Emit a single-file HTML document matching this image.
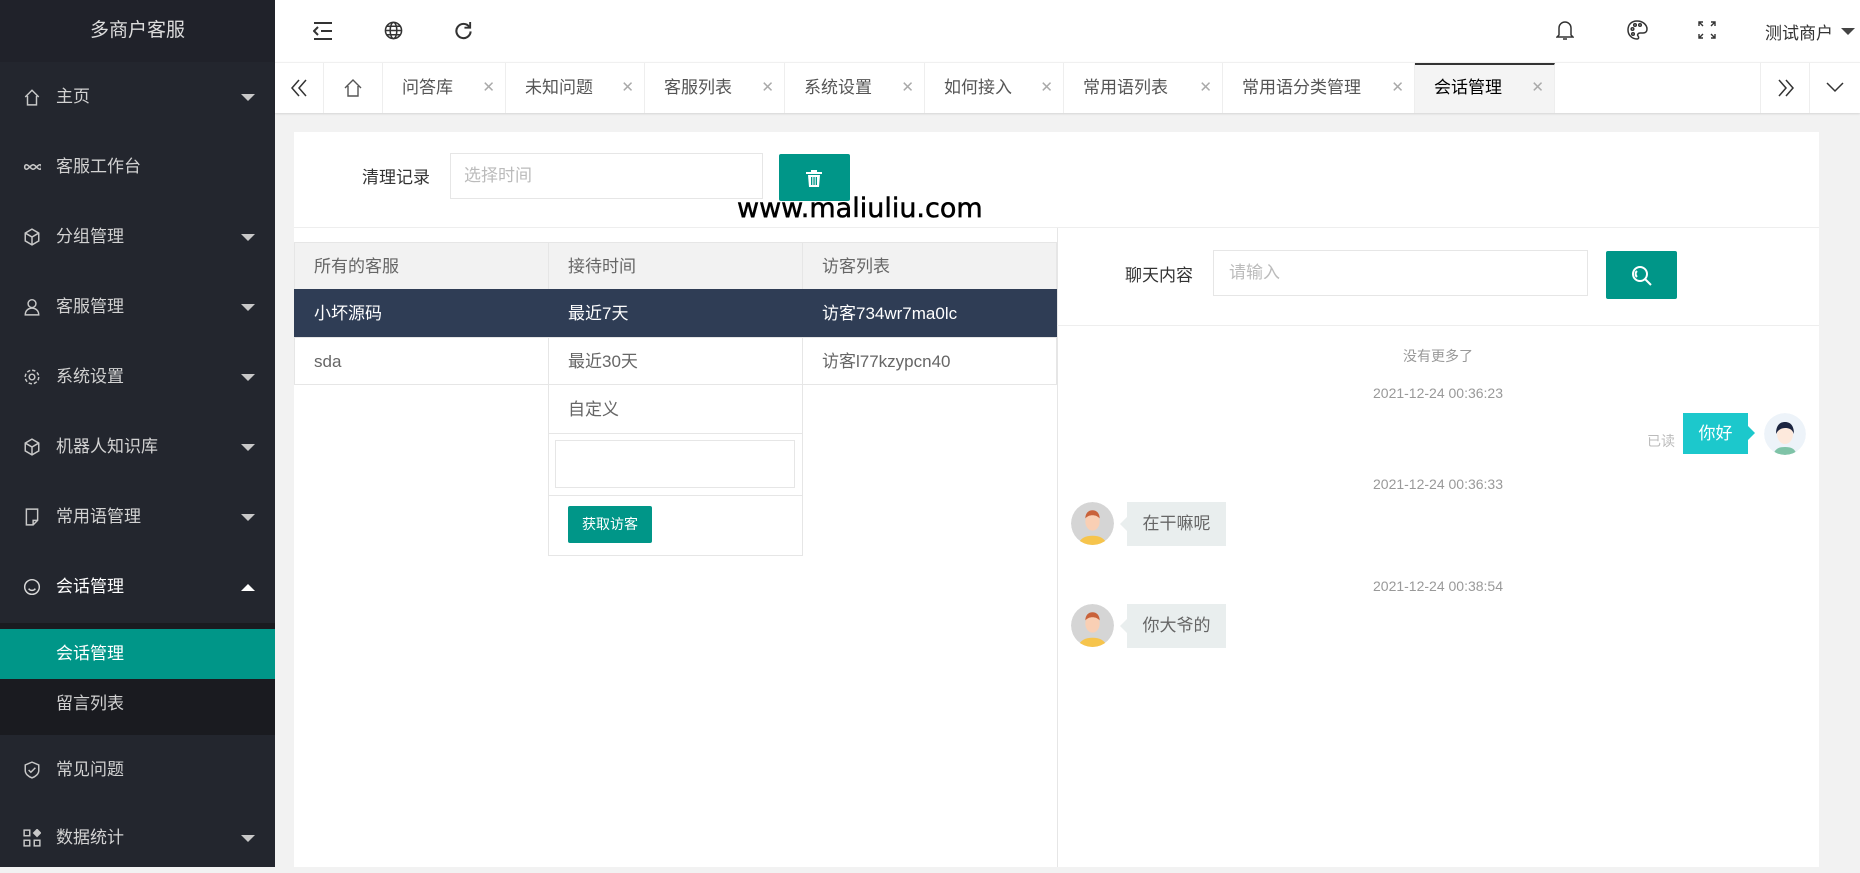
<!DOCTYPE html>
<html><head><meta charset="utf-8"><style>
*{margin:0;padding:0;box-sizing:border-box}
body{width:1860px;height:867px;overflow:hidden;background:#f2f2f2;font-family:"Liberation Sans","Noto Sans CJK SC",sans-serif;position:relative}
.abs{position:absolute}
#side{left:0;top:0;width:275px;height:867px;background:#23262e}
#logo{left:0;top:0;width:275px;height:62px;background:#20222a;color:#dcdcdc;font-size:19px;text-align:center;line-height:62px}
.mi{position:absolute;left:0;width:275px;height:70px;line-height:70px;color:#d2d2d2;font-size:17px}
.mi .t{position:absolute;left:56px}
.mi svg{position:absolute;left:23px;top:26px}
.arr{position:absolute;left:241px;top:32px;width:0;height:0;border-left:7px solid transparent;border-right:7px solid transparent;border-top:7px solid #c8c8c8}
.arr.up{border-top:0;border-bottom:7px solid #fff}
#hdr{left:275px;top:0;width:1585px;height:62px;background:#fff}
#tabs{left:275px;top:62px;width:1585px;height:51px;background:#fff;border-top:1px solid #f0f0f0;box-shadow:0 1px 2px rgba(0,0,0,.12)}
.tab{position:absolute;top:0;height:50px;line-height:50px;border-right:1px solid #eee;font-size:17px;color:#555}
.tab .x{position:absolute;right:10px;color:#aaa;font-size:15px}
#card{left:294px;top:132px;width:1525px;height:735px;background:#fff}
.cell{position:absolute;height:48px;line-height:48px;font-size:17px;color:#666;padding-left:19px;border:1px solid #e6e6e6}
.ts{position:absolute;left:1057px;width:762px;text-align:center;color:#999;font-size:14px}
</style></head><body>
<div id="side" class="abs">
 <div id="logo" class="abs">多商户客服</div>
 <div class="mi" style="top:62px"><svg width="18" height="18" viewBox="0 0 16 16" fill="none" stroke="#c8c8c8" stroke-width="1.3"><path d="M2 8L8 2l6 6M4 7v8h8V7"/></svg><span class="t">主页</span><i class="arr"></i></div>
 <div class="mi" style="top:132px"><svg width="18" height="18" viewBox="0 0 16 16" fill="none" stroke="#c8c8c8" stroke-width="1.4"><path d="M3 6c-2 0-2 4 0 4s4-4 6-4 4 4 6 4 2-4 0-4-4 4-6 4-4-4-6-4z"/></svg><span class="t">客服工作台</span></div>
 <div class="mi" style="top:202px"><svg width="18" height="18" viewBox="0 0 16 16" fill="none" stroke="#c8c8c8" stroke-width="1.3"><path d="M8 1l6 3.5v7L8 15l-6-3.5v-7zM2 4.5L8 8l6-3.5M8 8v7"/></svg><span class="t">分组管理</span><i class="arr"></i></div>
 <div class="mi" style="top:272px"><svg width="18" height="18" viewBox="0 0 16 16" fill="none" stroke="#c8c8c8" stroke-width="1.3"><circle cx="8" cy="5" r="3.5"/><path d="M2 15c0-4 3-6 6-6s6 2 6 6z"/></svg><span class="t">客服管理</span><i class="arr"></i></div>
 <div class="mi" style="top:342px"><svg width="18" height="18" viewBox="0 0 16 16" fill="none" stroke="#c8c8c8" stroke-width="1.3"><circle cx="8" cy="8" r="2.5"/><circle cx="8" cy="8" r="6" stroke-dasharray="3 1.7"/></svg><span class="t">系统设置</span><i class="arr"></i></div>
 <div class="mi" style="top:412px"><svg width="18" height="18" viewBox="0 0 16 16" fill="none" stroke="#c8c8c8" stroke-width="1.3"><path d="M8 1l6 3.5v7L8 15l-6-3.5v-7zM2 4.5L8 8l6-3.5M8 8v7"/></svg><span class="t">机器人知识库</span><i class="arr"></i></div>
 <div class="mi" style="top:482px"><svg width="18" height="18" viewBox="0 0 16 16" fill="none" stroke="#c8c8c8" stroke-width="1.3"><path d="M3 1h10v10l-4 4H3zM9 15v-4h4"/></svg><span class="t">常用语管理</span><i class="arr"></i></div>
 <div class="mi" style="top:552px;color:#fff"><svg width="18" height="18" viewBox="0 0 16 16" fill="none" stroke="#d8d8d8" stroke-width="1.3"><circle cx="8" cy="8" r="6.5"/><path d="M5 9.5c1.5 2 4.5 2 6 0"/></svg><span class="t">会话管理</span><i class="arr up"></i></div>
 <div class="abs" style="left:0;top:623px;width:275px;height:112px;background:#1a1b20"></div>
 <div class="abs" style="left:0;top:629px;width:275px;height:50px;background:#009688;color:#fff;font-size:17px;line-height:50px;padding-left:56px">会话管理</div>
 <div class="abs" style="left:0;top:679px;width:275px;height:50px;color:#d2d2d2;font-size:17px;line-height:50px;padding-left:56px">留言列表</div>
 <div class="mi" style="top:735px"><svg width="18" height="18" viewBox="0 0 16 16" fill="none" stroke="#c8c8c8" stroke-width="1.3"><path d="M8 1l6 2.5v5c0 3-3 5.5-6 6.5-3-1-6-3.5-6-6.5v-5zM5 8l2 2 4-4"/></svg><span class="t">常见问题</span></div>
 <div class="mi" style="top:803px"><svg width="18" height="18" viewBox="0 0 16 16" fill="none" stroke="#c8c8c8" stroke-width="1.3"><rect x="1" y="1" width="5" height="5"/><rect x="1" y="10" width="5" height="5"/><rect x="10" y="10" width="5" height="5"/><path d="M12.5 0.5l3 3-3 3-3-3z" fill="#c8c8c8"/></svg><span class="t">数据统计</span><i class="arr"></i></div>
</div>

<div id="hdr" class="abs">
 <svg class="abs" style="left:38px;top:22px" width="20" height="18" viewBox="0 0 20 18" fill="none" stroke="#333" stroke-width="2"><path d="M1 1h18M8 9h11M1 17h18M5 5L1 9l4 4"/></svg>
 <svg class="abs" style="left:109px;top:21px" width="19" height="19" viewBox="0 0 20 20" fill="none" stroke="#333" stroke-width="1.6"><circle cx="10" cy="10" r="8.5"/><ellipse cx="10" cy="10" rx="3.5" ry="8.5"/><path d="M1.5 10h17M3 5.5h14M3 14.5h14"/></svg>
 <svg class="abs" style="left:179px;top:21px" width="19" height="19" viewBox="0 0 20 20" fill="none" stroke="#333" stroke-width="2.2"><path d="M16 6A7.5 7.5 0 1 0 17.5 11"/><path d="M17 1v6h-6" stroke-width="2"/></svg>
 <svg class="abs" style="left:1281px;top:20px" width="18" height="21" viewBox="0 0 18 21" fill="none" stroke="#333" stroke-width="1.5"><path d="M3 15V8a6 6 0 0 1 12 0v7l2 2H1zM7 19h4"/></svg>
 <svg class="abs" style="left:1352px;top:20px" width="21" height="20" viewBox="0 0 21 20" fill="none" stroke="#333" stroke-width="1.5"><path d="M10 1C4 1 1 5 1 10s4 9 9 9c2 0 2-2 1-3s0-3 2-3h3c3 0 4-2 4-4 0-4-4-8-10-8z"/><circle cx="5.5" cy="9" r="1.3"/><circle cx="8" cy="5" r="1.3"/><circle cx="13" cy="5" r="1.3"/><circle cx="6" cy="14" r="1.3"/></svg>
 <svg class="abs" style="left:1423px;top:21px" width="18" height="18" viewBox="0 0 18 18" fill="none" stroke="#333" stroke-width="1.4"><path d="M1 5V1h4M1 1l4 4M13 1h4v4M17 1l-4 4M1 13v4h4M1 17l4-4M17 13v4h-4M17 17l-4-4"/></svg>
 <div class="abs" style="left:1490px;top:19px;font-size:17px;color:#333">测试商户</div>
 <i class="abs" style="left:1566px;top:28px;border-left:7px solid transparent;border-right:7px solid transparent;border-top:7px solid #444"></i>
</div>

<div id="tabs" class="abs">
 <div class="tab" style="left:0;width:49px"><svg class="abs" style="left:15px;top:16px" width="18" height="18" viewBox="0 0 18 18" fill="none" stroke="#333" stroke-width="1.5"><path d="M9 1L2 9l7 8M16 1L9 9l7 8"/></svg></div>
 <div class="tab" style="left:49px;width:59px"><svg class="abs" style="left:20px;top:16px" width="18" height="18" viewBox="0 0 18 18" fill="none" stroke="#555" stroke-width="1.4"><path d="M1 9l8-8 8 8M4 7v10h10V7"/></svg></div>
 <div class="tab" style="left:108px;width:123px;padding-left:19px">问答库<span class="x">✕</span></div>
 <div class="tab" style="left:231px;width:139px;padding-left:19px">未知问题<span class="x">✕</span></div>
 <div class="tab" style="left:370px;width:140px;padding-left:19px">客服列表<span class="x">✕</span></div>
 <div class="tab" style="left:510px;width:140px;padding-left:19px">系统设置<span class="x">✕</span></div>
 <div class="tab" style="left:650px;width:139px;padding-left:19px">如何接入<span class="x">✕</span></div>
 <div class="tab" style="left:789px;width:159px;padding-left:19px">常用语列表<span class="x">✕</span></div>
 <div class="tab" style="left:948px;width:192px;padding-left:19px">常用语分类管理<span class="x">✕</span></div>
 <div class="tab" style="left:1140px;width:140px;padding-left:19px;background:#f4f4f4;color:#000;border-top:2px solid #333;line-height:46px">会话管理<span class="x">✕</span></div>
 <div class="tab" style="left:1485px;width:50px;border-left:1px solid #eee"><svg class="abs" style="left:16px;top:16px" width="18" height="18" viewBox="0 0 18 18" fill="none" stroke="#333" stroke-width="1.5"><path d="M2 1l7 8-7 8M9 1l7 8-7 8"/></svg></div>
 <div class="tab" style="left:1535px;width:50px;border-right:0"><svg class="abs" style="left:16px;top:19px" width="18" height="11" viewBox="0 0 18 11" fill="none" stroke="#333" stroke-width="1.5"><path d="M1 1l8 8 8-8"/></svg></div>
</div>

<div id="card" class="abs"></div>
<div class="abs" style="left:362px;top:163px;font-size:17px;color:#333">清理记录</div>
<div class="abs" style="left:450px;top:153px;width:313px;height:46px;border:1px solid #e6e6e6;font-size:17px;color:#bbb;line-height:44px;padding-left:13px">选择时间</div>
<div class="abs" style="left:779px;top:154px;width:71px;height:47px;background:#009688;border-radius:2px"><svg class="abs" style="left:27px;top:16px" width="16" height="17" viewBox="0 0 16 17" fill="#fff"><rect x="0" y="2" width="16" height="2"/><rect x="5" y="0" width="6" height="2"/><path d="M2 5h12l-1 12H3zM5 7v8h1.3V7zM7.4 7v8h1.3V7zM9.7 7v8H11V7z" fill-rule="evenodd"/></svg></div>
<div class="abs" style="left:737px;top:193px;font-family:'DejaVu Sans',sans-serif;font-size:27px;color:#000;-webkit-text-stroke:0.5px #000">www.maliuliu.com</div>
<div class="abs" style="left:294px;top:227px;width:1525px;height:1px;background:#eee"></div>
<div class="abs" style="left:1057px;top:228px;width:1px;height:639px;background:#e6e6e6"></div>

<div class="cell" style="left:294px;top:242px;width:255px;background:#f2f2f2">所有的客服</div>
<div class="cell" style="left:548px;top:242px;width:255px;background:#f2f2f2">接待时间</div>
<div class="cell" style="left:802px;top:242px;width:255px;background:#f2f2f2">访客列表</div>
<div class="cell" style="left:294px;top:289px;width:255px;background:#2f3d55;color:#fff;border-color:#2f3d55">小坏源码</div>
<div class="cell" style="left:548px;top:289px;width:255px;background:#2f3d55;color:#fff;border-color:#2f3d55">最近7天</div>
<div class="cell" style="left:802px;top:289px;width:255px;background:#2f3d55;color:#fff;border-color:#2f3d55">访客734wr7ma0lc</div>
<div class="cell" style="left:294px;top:337px;width:255px">sda</div>
<div class="cell" style="left:548px;top:337px;width:255px">最近30天</div>
<div class="cell" style="left:802px;top:337px;width:255px">访客l77kzypcn40</div>
<div class="cell" style="left:548px;top:384px;width:255px;height:50px;line-height:50px">自定义</div>
<div class="cell" style="left:548px;top:433px;width:255px;height:63px"></div>
<div class="abs" style="left:555px;top:440px;width:240px;height:48px;border:1px solid #e6e6e6"></div>
<div class="cell" style="left:548px;top:495px;width:255px;height:61px"></div>
<div class="abs" style="left:568px;top:506px;width:84px;height:37px;background:#009688;color:#fff;font-size:14px;line-height:37px;text-align:center;border-radius:2px">获取访客</div>

<div class="abs" style="left:1125px;top:261px;font-size:17px;color:#333">聊天内容</div>
<div class="abs" style="left:1213px;top:250px;width:375px;height:46px;border:1px solid #e6e6e6;font-size:17px;color:#bbb;line-height:44px;padding-left:15px">请输入</div>
<div class="abs" style="left:1606px;top:251px;width:71px;height:48px;background:#009688;border-radius:2px"><svg class="abs" style="left:25px;top:14px" width="22" height="22" viewBox="0 0 22 22" fill="none" stroke="#fff" stroke-width="2"><circle cx="9" cy="9" r="7"/><path d="M14 14l6 6M6 6a4 4 0 0 0 0 6"/></svg></div>
<div class="abs" style="left:1057px;top:325px;width:762px;height:1px;background:#eee"></div>

<div class="ts" style="top:346px">没有更多了</div>
<div class="ts" style="top:385px">2021-12-24 00:36:23</div>
<div class="ts" style="top:476px">2021-12-24 00:36:33</div>
<div class="ts" style="top:578px">2021-12-24 00:38:54</div>

<div class="abs" style="left:1647px;top:431px;font-size:14px;color:#bbb">已读</div>
<div class="abs" style="left:1683px;top:413px;width:65px;height:41px;background:#1cc8cc;color:#fff;font-size:17px;line-height:41px;text-align:center">你好</div>
<i class="abs" style="left:1748px;top:426px;border-top:7px solid transparent;border-bottom:7px solid transparent;border-left:7px solid #1cc8cc"></i>
<svg class="abs" style="left:1764px;top:413px;border-radius:50%" width="42" height="42" viewBox="0 0 42 42"><defs><clipPath id="c1"><circle cx="21" cy="21" r="21"/></clipPath></defs><g clip-path="url(#c1)"><circle cx="21" cy="21" r="21" fill="#edf3f9"/><path d="M9 44c1-8 5-10 12-10s11 2 12 10z" fill="#7fc3a7"/><ellipse cx="21" cy="21" rx="8" ry="10" fill="#fde9dc"/><path d="M12 21c0-9 4-12 9-12s9 3 9 12c-2-5-5-6-9-6s-7 2-9 6z" fill="#1c2540"/></g></svg>

<svg class="abs" style="left:1071px;top:502px" width="43" height="43" viewBox="0 0 42 42"><defs><clipPath id="c2"><circle cx="21" cy="21" r="21"/></clipPath></defs><g clip-path="url(#c2)"><circle cx="21" cy="21" r="21" fill="#d5d5d5"/><path d="M6 44c2-8 7-11 15-11s13 3 15 11z" fill="#f6c44c"/><ellipse cx="21" cy="19" rx="7" ry="9" fill="#f9cfb4"/><path d="M14 16c0-5 3-8 7-8s7 3 7 8c-2-2-4-3-7-3s-5 1-7 3z" fill="#c9623a"/></g></svg>
<i class="abs" style="left:1120px;top:517px;border-top:7px solid transparent;border-bottom:7px solid transparent;border-right:7px solid #e9eeee"></i>
<div class="abs" style="left:1127px;top:502px;width:99px;height:44px;background:#e9eeee;color:#666;font-size:17px;line-height:44px;text-align:center">在干嘛呢</div>

<svg class="abs" style="left:1071px;top:604px" width="43" height="43" viewBox="0 0 42 42"><g clip-path="url(#c2)"><circle cx="21" cy="21" r="21" fill="#d5d5d5"/><path d="M6 44c2-8 7-11 15-11s13 3 15 11z" fill="#f6c44c"/><ellipse cx="21" cy="19" rx="7" ry="9" fill="#f9cfb4"/><path d="M14 16c0-5 3-8 7-8s7 3 7 8c-2-2-4-3-7-3s-5 1-7 3z" fill="#c9623a"/></g></svg>
<i class="abs" style="left:1120px;top:619px;border-top:7px solid transparent;border-bottom:7px solid transparent;border-right:7px solid #e9eeee"></i>
<div class="abs" style="left:1127px;top:604px;width:99px;height:44px;background:#e9eeee;color:#666;font-size:17px;line-height:44px;text-align:center">你大爷的</div>
</body></html>
